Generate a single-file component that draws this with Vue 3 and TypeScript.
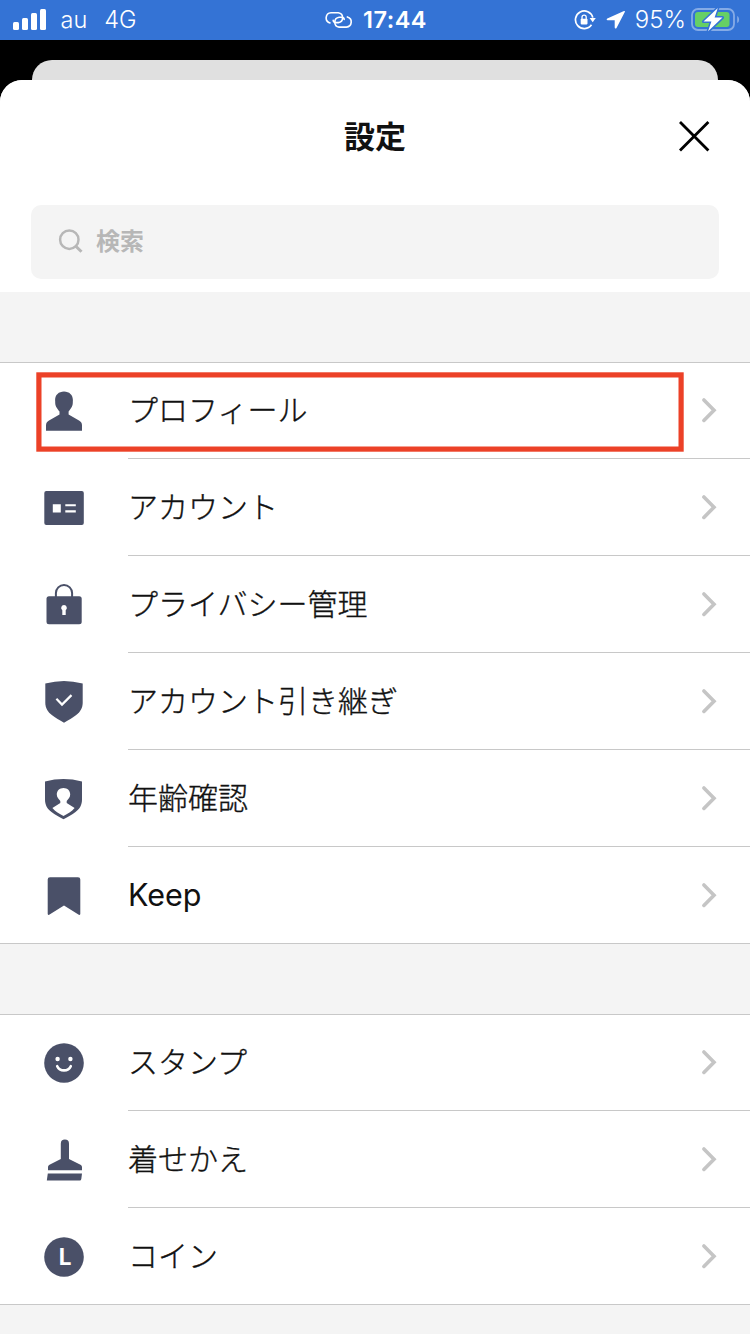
<script setup lang="ts">
interface Item { icon: string; label: string; marked?: boolean }

const groups: Item[][] = [
  [
    { icon: 'person', label: 'プロフィール', marked: true },
    { icon: 'card', label: 'アカウント' },
    { icon: 'lock', label: 'プライバシー管理' },
    { icon: 'shield', label: 'アカウント引き継ぎ' },
    { icon: 'age', label: '年齢確認' },
    { icon: 'keep', label: 'Keep' },
  ],
  [
    { icon: 'smile', label: 'スタンプ' },
    { icon: 'brush', label: '着せかえ' },
    { icon: 'coin', label: 'コイン' },
  ],
]
</script>

<template>
  <div class="screen">
    <header class="status">
      <div class="side left">
        <svg class="signal" width="34" height="22" viewBox="0 0 34 22" fill="#fff">
          <rect x="0" y="13" width="6" height="8" rx="1.5" />
          <rect x="9" y="9" width="6" height="12" rx="1.5" />
          <rect x="18" y="4" width="6" height="17" rx="1.5" />
          <rect x="27" y="0" width="6" height="21" rx="1.5" />
        </svg>
        <span class="carrier">au</span>
        <span class="network">4G</span>
      </div>
      <div class="center">
        <svg width="28" height="18" viewBox="0 0 28 18" fill="none" stroke="#fff" stroke-width="1.6" stroke-linecap="round">
          <path d="M5 11.900A5.200 5.200 0 0 1 6 1.700h7.300a5 5 0 0 1 0 9.900h-2.200c-1.700 0-2.900-.9-2.900-2.300" />
          <path d="M22.400 5.900A5.200 5.200 0 0 1 21.400 16.100h-7.300a5 5 0 0 1 0-9.900h2.200c1.700 0 2.900.9 2.900 2.300" />
        </svg>
        <span class="time">17:44</span>
      </div>
      <div class="side right">
        <svg class="rotation" width="22" height="22" viewBox="0 0 22 22" fill="none">
          <path d="M17.500 15.800A8.800 8.800 0 1 1 18.800 8.600" stroke="#fff" stroke-width="1.700" />
          <path d="M15.600 9h6.200l-3.100 4.200z" fill="#fff" />
          <path d="M8 10.500V8.200a2.100 2.100 0 0 1 4.200 0v2.300" stroke="#fff" stroke-width="1.300" />
          <rect x="6.700" y="9.700" width="6.800" height="5.700" rx=".8" fill="#fff" />
        </svg>
        <svg class="arrow" width="20" height="20" viewBox="0 0 20 20">
          <path d="M18 1.100 1.300 8.600c-1 .5-.8 1.700.3 1.700h7.100v7.300c0 1.200 1.300 1.400 1.800.3L18.800 2c.3-.7-.1-1.200-.8-.9Z" fill="#fff" />
        </svg>
        <span class="percent">95%</span>
        <svg class="battery" width="50" height="26" viewBox="0 0 50 26">
          <rect x="1" y="2" width="42" height="21" rx="6" fill="none" stroke="#85abe6" stroke-width="1.800" />
          <path d="M46.200 9c2.500 1 2.500 6 0 7z" fill="#85abe6" />
          <rect x="4" y="5" width="34.500" height="15" rx="3" fill="#66cf65" />
          <path d="M26.800 1 12.500 14.600h7.900L17.100 24.300 31.500 10.600h-7.900z" fill="#fff" stroke="#3473d5" stroke-width="3" stroke-linejoin="round" paint-order="stroke" />
        </svg>
      </div>
    </header>
    <div class="backdrop"><div class="behind"></div></div>
    <main class="sheet">
      <div class="titlebar">
        <h1>設定</h1>
        <svg class="close" width="32" height="32" viewBox="0 0 32 32" stroke="#000" stroke-width="2.800">
          <path d="m2 2 28.400 28.400M30.400 2 2 30.400" />
        </svg>
      </div>
      <div class="search">
        <svg width="26" height="26" viewBox="0 0 26 26" fill="none" stroke="#b7b7b7" stroke-width="2.500">
          <circle cx="11.300" cy="10.700" r="9.200" />
          <path d="m17.800 17.200 5.700 5.600" stroke-width="3" />
        </svg>
        <span>検索</span>
      </div>
      <section v-for="(group, g) in groups" :key="g" class="group">
        <div v-for="item in group" :key="item.icon" class="row">
          <svg class="icon" width="48" height="48" viewBox="0 0 48 48" fill="#4a5068">
            <path v-if="item.icon === 'person'" d="M24 4.600c-5.300 0-8.900 3.500-8.900 8.500 0 .9.200 1.700.1 2.600 0 4 2.700 6.300 4.300 8.900v2.800L9 33.600c-2 1.100-3 2.600-3 4.800V43.800h36v-5.400c0-2.200-1-3.700-3-4.800l-10.400-6.200v-2.800c1.600-2.600 4.200-4.900 4.200-8.900 0-.9.100-1.700.1-2.600 0-5-3.600-8.500-8.900-8.500Z" />
            <template v-else-if="item.icon === 'card'">
              <rect x="4.300" y="7" width="39.500" height="34" rx="2" />
              <path d="M12.800 20.200h8v8.200h-8zM25.300 20.200h10.500v2.100H25.300zM25.300 26.300h10.500v2.100H25.300z" fill="#fff" />
            </template>
            <template v-else-if="item.icon === 'lock'">
              <path d="M15.900 16v-3.900a8.100 8.100 0 0 1 16.200 0V16" fill="none" stroke="#4a5068" stroke-width="2" />
              <rect x="6.500" y="15.200" width="35.200" height="28" rx="2.500" />
              <path d="M24 24a2.900 2.900 0 0 0-1.700 5.200V34h3.400v-4.800A2.900 2.900 0 0 0 24 24Z" fill="#fff" />
            </template>
            <template v-else-if="item.icon === 'shield'">
              <path d="M5.300 5.600Q15 3 24 3t18.700 2.600v19c0 5.500-2.300 9.200-6.500 12.500-3.600 2.800-7.700 5.100-12.200 7.600-4.500-2.500-8.600-4.800-12.200-7.600C7.600 33.800 5.300 30.100 5.300 24.600Z" />
              <path d="m16.400 20.800 5.600 5.800 9.500-9.500" fill="none" stroke="#fff" stroke-width="2.200" />
            </template>
            <template v-else-if="item.icon === 'age'">
              <path d="M5 6.400Q14.500 4 23.500 4T42 6.400v18.100c0 5.500-2.300 9.400-6.500 12.500-3.600 2.700-7.500 4.900-12 7.300-4.500-2.400-8.400-4.600-12-7.300C7.300 33.900 5 30 5 24.500Z" />
              <path d="M23.500 13c-4 0-6.700 2.800-6.700 6.500 0 2.900 1.900 4.400 3.500 6.400v2l-7.900 5c2.900 3.600 6.900 5.800 11.100 8.100 4.200-2.300 8.200-4.500 11.100-8.100l-7.900-5v-2c1.600-2 3.500-3.500 3.500-6.400 0-3.700-2.700-6.500-6.700-6.500Z" fill="#fff" />
            </template>
            <path v-else-if="item.icon === 'keep'" d="M10 5.300h28a2.300 2.300 0 0 1 2.300 2.300v34.200c0 1-.7 1.400-1.500.9L24 33.600 9.200 42.700c-.8.500-1.500.1-1.500-.9V7.600A2.300 2.300 0 0 1 10 5.300Z" />
            <template v-else-if="item.icon === 'smile'">
              <circle cx="24" cy="24" r="19.800" />
              <circle cx="17.600" cy="20" r="2.200" fill="#fff" />
              <circle cx="30.400" cy="20" r="2.200" fill="#fff" />
              <path d="M17.200 27.200c1.200 2.700 3.600 4.200 6.800 4.200s5.600-1.500 6.800-4.200" fill="none" stroke="#fff" stroke-width="2.600" stroke-linecap="round" />
            </template>
            <template v-else-if="item.icon === 'brush'">
              <path d="M20.800 7.700a4.100 4.100 0 0 1 8.200 0V23l11.500 5.700q1.500.8 1.500 2.300v3.300H8V31q0-1.500 1.500-2.300L20.800 23Z" />
              <path d="M7.800 37.400H42l-.7 5.500q-.2 1.600-1.600 1.600H6.800Z" />
            </template>
            <template v-else>
              <circle cx="24" cy="24" r="19.800" />
              <text class="coin" x="18.700" y="31.800" fill="#fff">L</text>
            </template>
          </svg>
          <span class="label" :class="{ latin: item.icon === 'keep' }">{{ item.label }}</span>
          <svg class="chevron" width="20" height="48" viewBox="0 0 20 48" fill="none" stroke="#c5c5c5" stroke-width="3.600">
            <path d="M3.900 13 14 23.200 3.900 33.400" stroke-linecap="round" />
          </svg>
          <svg v-if="item.marked" class="mark" width="648" height="80" viewBox="0 0 648 80">
            <rect x="2.900" y="2.900" width="642.200" height="74.200" fill="none" stroke="#ec4127" stroke-width="5.200" />
          </svg>
        </div>
      </section>
    </main>
  </div>
</template>

<style>
body { margin: 0; background: #f4f4f4; }
</style>

<style scoped>
.screen { width: 750px; height: 1334px; overflow: hidden; background: #000; font-family: Inter, "Noto Sans CJK JP", sans-serif; color: #111; }
.status { height: 40px; display: grid; grid-template-columns: 1fr 120px 1fr; background: #3473d5; color: #fff; line-height: 42px; font-size: 24px; }
.side, .center { display: flex; align-items: center; height: 40px; white-space: nowrap; }
.left { padding-left: 13px; }
.carrier { margin-left: 13.500px; font-size: 23.500px; font-weight: 300; }
.network { margin-left: 17px; font-size: 23.500px; font-weight: 300; }
.center { padding-left: 10px; }
.time { margin-left: 10px; font-weight: 600; font-size: 23.500px; letter-spacing: .5px; }
.right { justify-content: flex-end; padding-right: 9px; }
.arrow { margin-left: 10px; }
.percent { margin-left: 9px; font-weight: 300; font-size: 24px; }
.battery { margin-left: 5px; }
.backdrop { height: 40px; padding: 20px 32px 0; box-sizing: border-box; }
.behind { height: 40px; border-radius: 20px 20px 0 0; background: #e0e0e0; }
.sheet { height: 1254px; background: #f4f4f4; border-radius: 22px 22px 0 0; overflow: hidden; }
.titlebar { height: 125px; background: #fff; display: grid; grid-template-columns: 1fr auto 1fr; }
h1 { grid-column: 2; margin: 0; font-size: 31px; line-height: 113px; font-weight: 700; }
.close { justify-self: end; margin: 40px 40px 0 0; }
.search { position: relative; height: 74px; padding-left: 58px; display: flex; align-items: center; gap: 12px; background: #fff; isolation: isolate; box-shadow: 0 13px 0 #fff; color: #b7b7b7; font-size: 24px; font-weight: 700; }
.search::before { content: ""; position: absolute; inset: 0 31px; border-radius: 10px; background: #f4f4f4; z-index: -1; }
.search span { line-height: 74px; height: 74px; }
.group { margin-top: 70px; border-top: 1px solid #c8c8c8; background: #fff; }
.search + .group { margin-top: 83px; }
.row { position: relative; display: flex; align-items: flex-end; height: 97px; box-sizing: border-box; padding: 0 32px 24px 40px; }
.row:first-child { height: 96px; }
.row::after { content: ""; position: absolute; left: 128px; right: 0; bottom: 0; height: 1px; background: #c8c8c8; }
.row:last-child::after { left: 0; }
.label { margin-left: 40px; flex: 1; font-size: 30px; line-height: 46px; height: 48px; font-weight: 300; -webkit-text-stroke: .35px #111; }
.latin { font-size: 30.500px; font-weight: 400; -webkit-text-stroke: 0; }
.icon, .chevron { flex: none; }
.chevron { margin-right: -2px; }
.mark { position: absolute; left: 36px; top: 9px; }
.coin { font: 700 22.500px Inter, sans-serif; }
</style>
